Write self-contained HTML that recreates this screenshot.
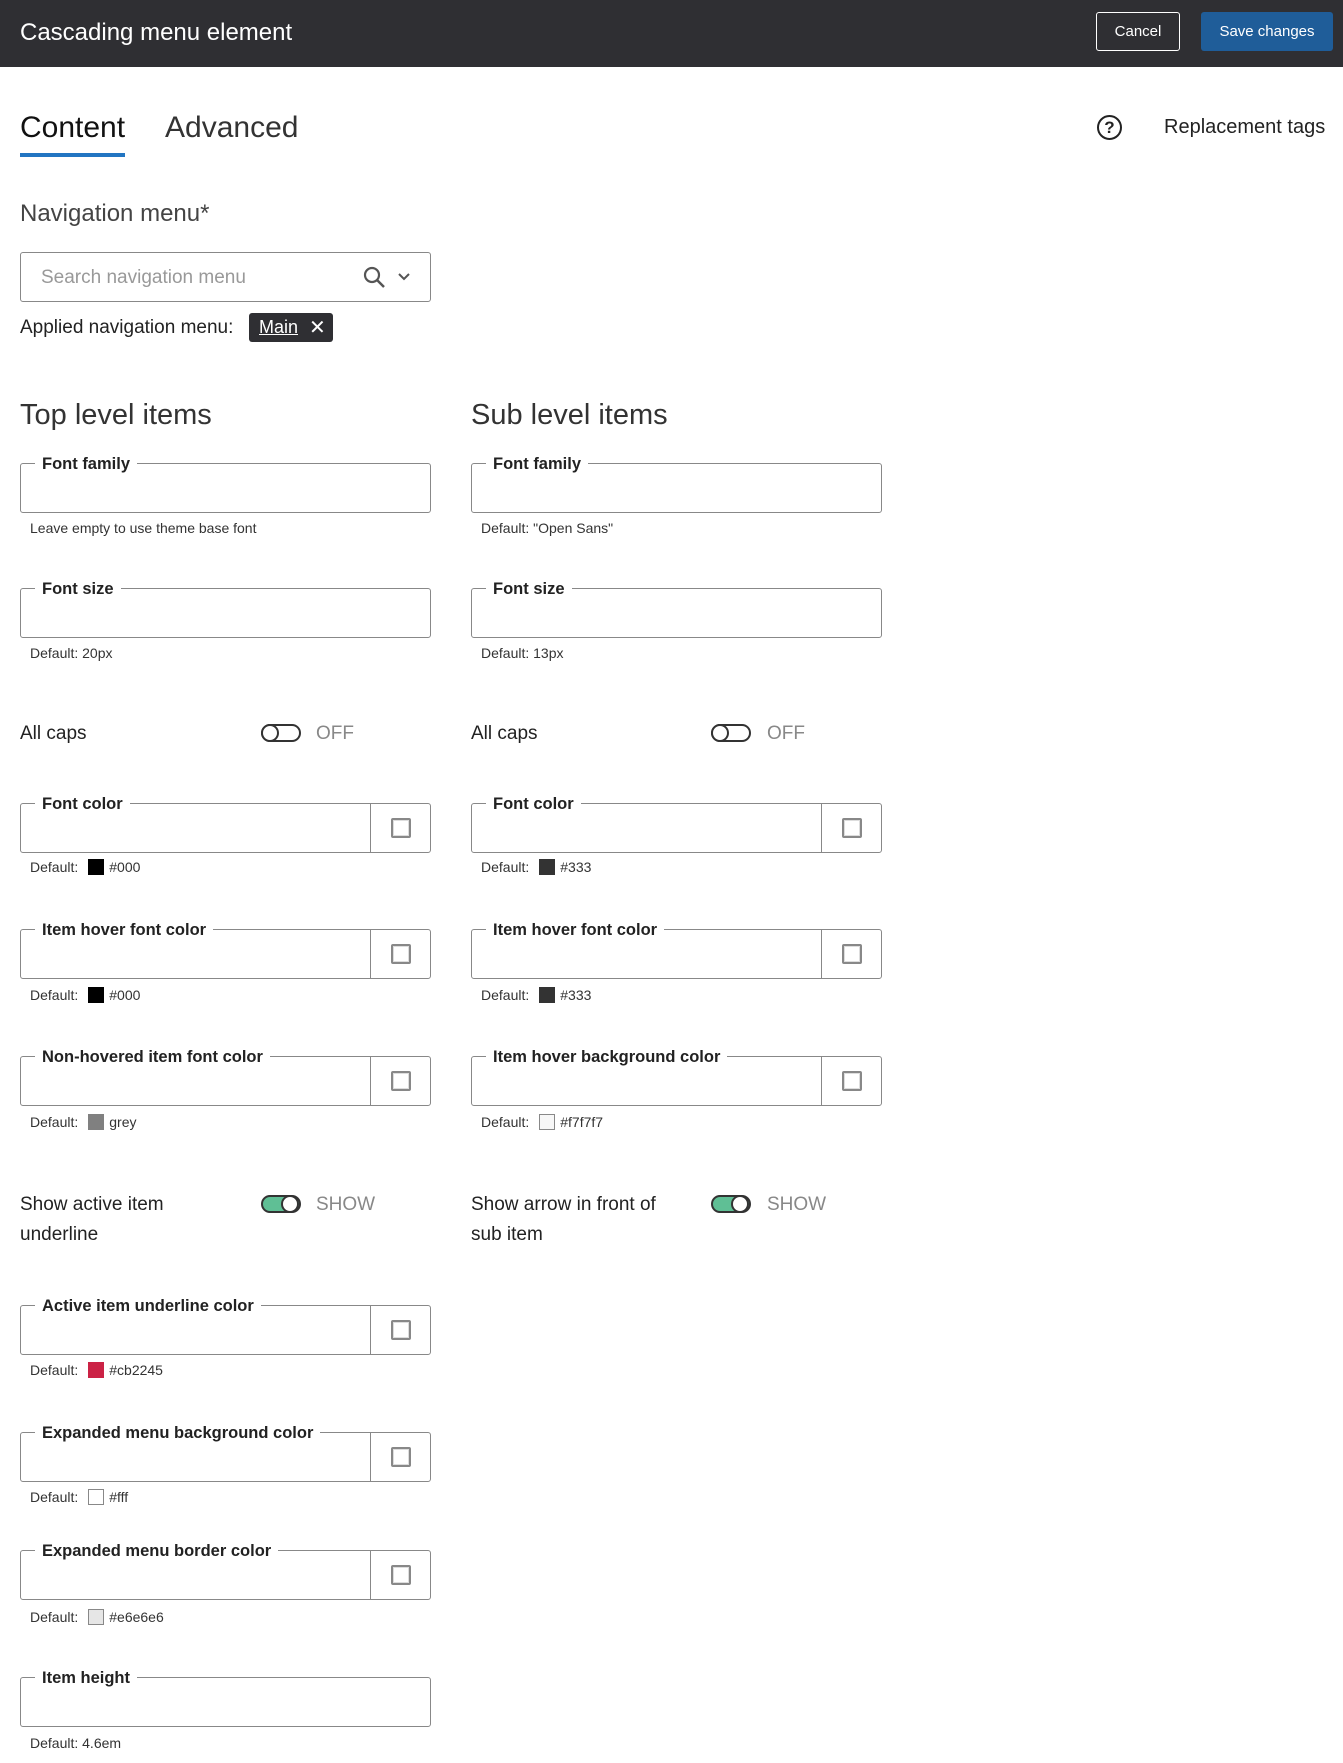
<!DOCTYPE html>
<html><head><meta charset="utf-8"><style>
*{box-sizing:border-box;margin:0;padding:0}
body{width:1343px;height:1763px;background:#fff;font-family:"Liberation Sans",Arial,sans-serif;color:#222;position:relative;overflow:hidden}
.a{position:absolute;white-space:nowrap}
.hdr{position:absolute;left:0;top:0;width:1343px;height:67px;background:#2f2f33}
.f{position:absolute;width:411px;height:50px;border:1px solid #888;border-radius:3px}
.f .l{position:absolute;top:-11px;left:14px;background:#fff;padding:0 7px;font-weight:bold;font-size:16.5px;line-height:22px;color:#222}
.f .d{position:absolute;left:349px;top:0;bottom:0;border-left:1px solid #888;width:61px}
.f .d i{position:absolute;left:20px;top:14px;width:20px;height:20px;border:2px solid #888;border-radius:2px;box-shadow:inset 0 0 0 1px #ddd}
.h{position:absolute;font-size:14px;color:#333;white-space:nowrap;line-height:16px}
.h s{display:inline-block;width:16px;height:16px;vertical-align:-3px;margin:0 5px 0 10px;text-decoration:none}
.lab{position:absolute;font-size:19px;color:#222;line-height:30px}
.tg{position:absolute;width:40px;height:18px;border:2px solid #333;border-radius:9px}
.tg::after{content:"";position:absolute;top:-2px;left:-2px;width:18px;height:18px;border:2px solid #333;border-radius:50%;background:#fff;box-sizing:border-box}
.tg.on{background:#5fbf95}
.tg.on::after{left:18px}
.tt{position:absolute;font-size:19px;color:#888}
</style></head><body>
<div class="hdr"></div>
<div class="a" style="left:20px;top:19px;font-size:24px;color:#fff">Cascading menu element</div>
<div class="a" style="left:1096px;top:12px;width:84px;height:39px;border:1px solid #fff;border-radius:3px;color:#fff;font-size:15px;text-align:center;line-height:37px">Cancel</div>
<div class="a" style="left:1201px;top:12px;width:132px;height:39px;background:#1f5d99;border-radius:3px;color:#fff;font-size:15px;text-align:center;line-height:39px">Save changes</div>

<div class="a" style="left:20px;top:111px;font-size:30px;color:#111">Content</div>
<div class="a" style="left:20px;top:153px;width:105px;height:4px;background:#2275c2"></div>
<div class="a" style="left:165px;top:111px;font-size:30px;color:#333">Advanced</div>
<div class="a" style="left:1097px;top:115px;width:25px;height:25px;border:2px solid #222;border-radius:50%;font-size:17px;font-weight:bold;text-align:center;line-height:21px">?</div>
<div class="a" style="left:1164px;top:116px;font-size:20px;color:#222">Replacement tags</div>

<div class="a" style="left:20px;top:200px;font-size:24px;color:#444">Navigation menu*</div>
<div class="a" style="left:20px;top:252px;width:411px;height:50px;border:1px solid #888;border-radius:3px"></div>
<div class="a" style="left:41px;top:267px;font-size:19px;color:#999">Search navigation menu</div>
<svg class="a" style="left:362px;top:265px" width="50" height="26" viewBox="0 0 50 26"><circle cx="10" cy="10" r="7" fill="none" stroke="#555" stroke-width="2.2"/><path d="M15 15l7 7" stroke="#555" stroke-width="2.5"/><path d="M37 9l5 5 5-5" fill="none" stroke="#555" stroke-width="2"/></svg>
<div class="a" style="left:20px;top:317px;font-size:19px;color:#222">Applied navigation menu:</div>
<div class="a" style="left:249px;top:313px;width:84px;height:29px;background:#2f2f33;border-radius:3px"></div>
<div class="a" style="left:259px;top:317px;font-size:18px;color:#fff;text-decoration:underline">Main</div>
<div class="a" style="left:309px;top:315px;font-size:20px;color:#fff">✕</div>

<div class="a" style="left:20px;top:399px;font-size:29px;color:#333">Top level items</div>
<div class="a" style="left:471px;top:399px;font-size:29px;color:#333">Sub level items</div>

<!-- left column -->
<div class="f" style="left:20px;top:463px"><span class="l">Font family</span></div>
<div class="h" style="left:30px;top:520px">Leave empty to use theme base font</div>
<div class="f" style="left:20px;top:588px"><span class="l">Font size</span></div>
<div class="h" style="left:30px;top:645px">Default: 20px</div>
<div class="lab" style="left:20px;top:719px">All caps</div>
<div class="tg" style="left:261px;top:724px"></div>
<div class="tt" style="left:316px;top:723px">OFF</div>
<div class="f" style="left:20px;top:803px"><span class="l">Font color</span><span class="d"><i></i></span></div>
<div class="h" style="left:30px;top:859px">Default:<s style="background:#000"></s>#000</div>
<div class="f" style="left:20px;top:929px"><span class="l">Item hover font color</span><span class="d"><i></i></span></div>
<div class="h" style="left:30px;top:987px">Default:<s style="background:#000"></s>#000</div>
<div class="f" style="left:20px;top:1056px"><span class="l">Non-hovered item font color</span><span class="d"><i></i></span></div>
<div class="h" style="left:30px;top:1114px">Default:<s style="background:#808080"></s>grey</div>
<div class="lab" style="left:20px;top:1190px">Show active item<br>underline</div>
<div class="tg on" style="left:261px;top:1195px"></div>
<div class="tt" style="left:316px;top:1194px">SHOW</div>
<div class="f" style="left:20px;top:1305px"><span class="l">Active item underline color</span><span class="d"><i></i></span></div>
<div class="h" style="left:30px;top:1362px">Default:<s style="background:#cb2245"></s>#cb2245</div>
<div class="f" style="left:20px;top:1432px"><span class="l">Expanded menu background color</span><span class="d"><i></i></span></div>
<div class="h" style="left:30px;top:1489px">Default:<s style="background:#fff;border:1px solid #888"></s>#fff</div>
<div class="f" style="left:20px;top:1550px"><span class="l">Expanded menu border color</span><span class="d"><i></i></span></div>
<div class="h" style="left:30px;top:1609px">Default:<s style="background:#e6e6e6;border:1px solid #888"></s>#e6e6e6</div>
<div class="f" style="left:20px;top:1677px"><span class="l">Item height</span></div>
<div class="h" style="left:30px;top:1735px">Default: 4.6em</div>

<!-- right column -->
<div class="f" style="left:471px;top:463px"><span class="l">Font family</span></div>
<div class="h" style="left:481px;top:520px">Default: "Open Sans"</div>
<div class="f" style="left:471px;top:588px"><span class="l">Font size</span></div>
<div class="h" style="left:481px;top:645px">Default: 13px</div>
<div class="lab" style="left:471px;top:719px">All caps</div>
<div class="tg" style="left:711px;top:724px"></div>
<div class="tt" style="left:767px;top:723px">OFF</div>
<div class="f" style="left:471px;top:803px"><span class="l">Font color</span><span class="d"><i></i></span></div>
<div class="h" style="left:481px;top:859px">Default:<s style="background:#333"></s>#333</div>
<div class="f" style="left:471px;top:929px"><span class="l">Item hover font color</span><span class="d"><i></i></span></div>
<div class="h" style="left:481px;top:987px">Default:<s style="background:#333"></s>#333</div>
<div class="f" style="left:471px;top:1056px"><span class="l">Item hover background color</span><span class="d"><i></i></span></div>
<div class="h" style="left:481px;top:1114px">Default:<s style="background:#f7f7f7;border:1px solid #888"></s>#f7f7f7</div>
<div class="lab" style="left:471px;top:1190px">Show arrow in front of<br>sub item</div>
<div class="tg on" style="left:711px;top:1195px"></div>
<div class="tt" style="left:767px;top:1194px">SHOW</div>
</body></html>
